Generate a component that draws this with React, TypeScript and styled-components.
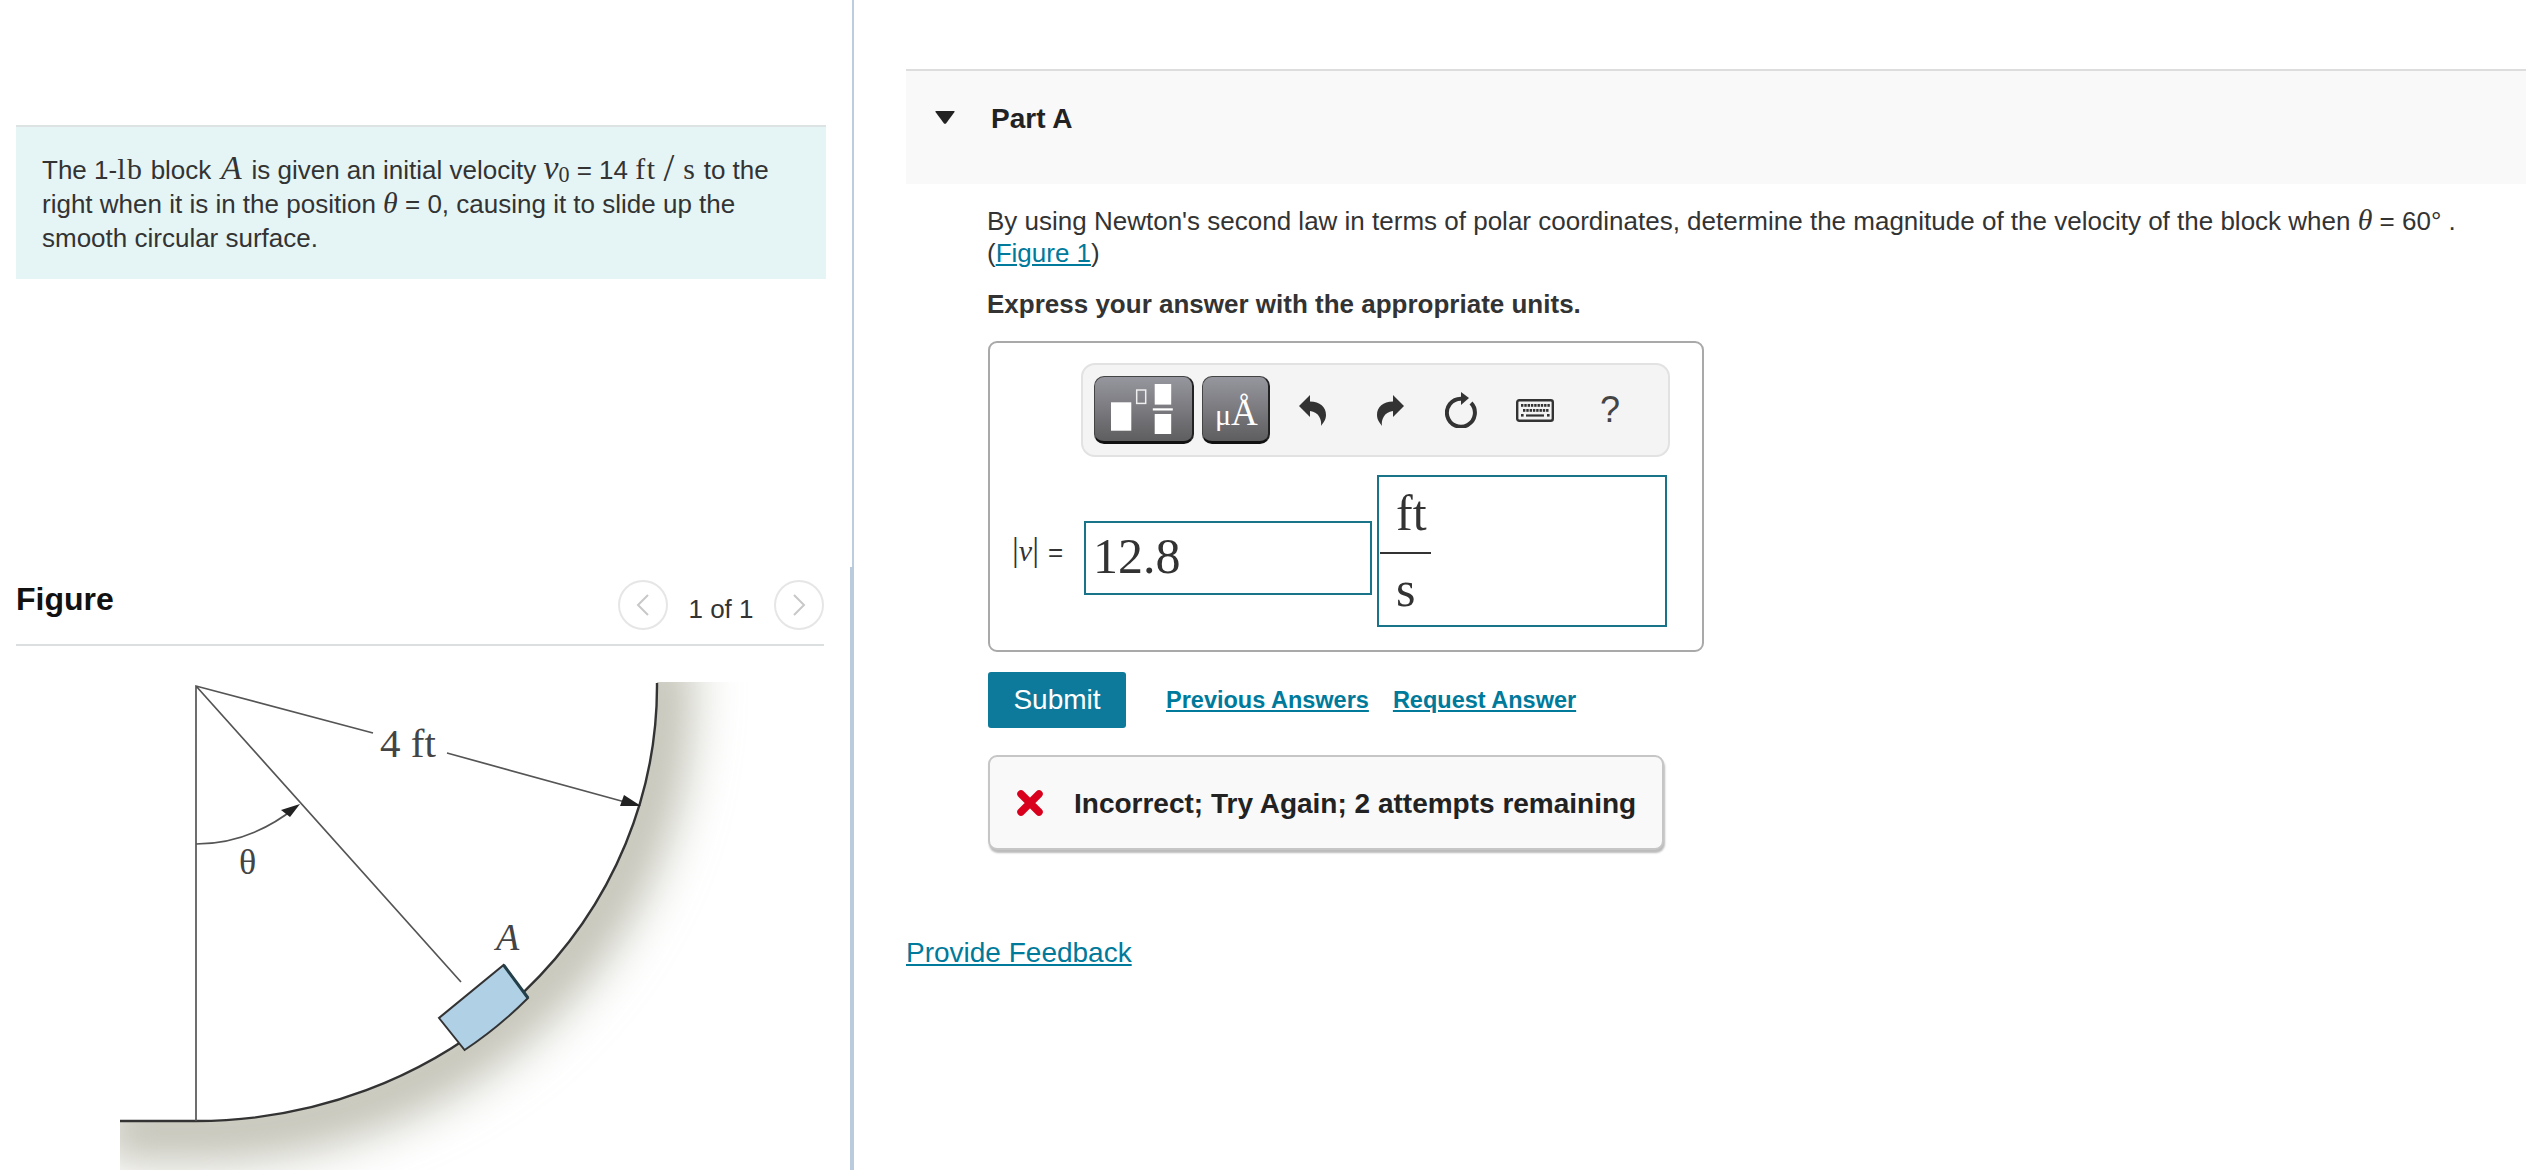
import React from "react";
import styled, { createGlobalStyle } from "styled-components";

const Global = createGlobalStyle`
  html, body { margin: 0; padding: 0; background: #fff; height: 100%; overflow: hidden; }
  body { font-family: "Liberation Sans", Arial, sans-serif; color: #333; }
`;

const Page = styled.div`
  display: grid;
  grid-template-columns: 854px 1fr;
  width: 2526px;
  height: 1170px;
  overflow: hidden;
`;

const LeftPane = styled.section`
  box-sizing: border-box;
  height: 1170px;
  padding: 125px 26px 0 16px;
  border-right: 2px solid #bccddf;
  position: relative;
  &::after {
    content: "";
    position: absolute;
    right: -2px;
    top: 567px;
    bottom: 0;
    width: 4px;
    background: #b9cbdd;
  }
`;

const Intro = styled.div`
  box-sizing: border-box;
  height: 154px;
  border-top: 2px solid #dde3e3;
  background: #e5f5f6;
  padding: 24px 26px 0;
  font-size: 26px;
  color: #333;
`;

const IntroLine = styled.div<{ $h: number }>`
  height: ${(p) => p.$h}px;
  line-height: ${(p) => p.$h}px;
  white-space: nowrap;
`;

const Unit = styled.span`
  font-family: "Liberation Serif", serif;
  font-size: 1.15em;
  letter-spacing: 1.5px;
`;

const MathI = styled.i`
  font-family: "Liberation Serif", serif;
  font-size: 1.15em;
  line-height: 0;
`;

const BigMath = styled.i<{ $gap: number }>`
  font-family: "Liberation Serif", serif;
  font-size: 1.3em;
  line-height: 0;
  margin: 0 ${(p) => p.$gap}px;
`;

const Sub = styled.span`
  font-family: "Liberation Serif", serif;
  font-size: 0.85em;
  line-height: 0;
  vertical-align: -3px;
`;

const Slash = styled.span`
  font-family: "Liberation Serif", serif;
  font-size: 1.5em;
  font-weight: 300;
  line-height: 0;
  vertical-align: -2px;
  margin: 0 9px 0 7px;
`;

const FigureHead = styled.header`
  box-sizing: border-box;
  margin: 296px 2px 0 0;
  height: 71px;
  border-bottom: 2px solid #dcdfe0;
  display: flex;
  align-items: center;
`;

const FigureTitle = styled.h2`
  margin: 0 0 20px;
  font-size: 32px;
  font-weight: 700;
  color: #111;
  flex: 1;
`;

const NavCircle = styled.span`
  box-sizing: border-box;
  width: 50px;
  height: 50px;
  border: 2px solid #e6e6e6;
  border-radius: 50%;
  display: flex;
  align-items: center;
  justify-content: center;
  margin-bottom: 10px;
`;

const NavCount = styled.span`
  font-size: 26px;
  color: #333;
  width: 106px;
  text-align: center;
`;

const FigureArt = styled.svg`
  display: block;
  margin-left: -16px;
  width: 852px;
  height: 524px;
`;

const RightPane = styled.section`
  height: 1170px;
  overflow: hidden;
  padding: 69px 0 0 52px;
`;

const PartHead = styled.header`
  box-sizing: border-box;
  height: 115px;
  border-top: 2px solid #dddddd;
  background: #f9f9f9;
  display: flex;
  padding: 32px 0 0 29px;
  align-items: flex-start;
`;

const Caret = styled.svg`
  width: 20px;
  height: 13px;
  margin-top: 8px;
`;

const PartTitle = styled.h3`
  margin: 0 0 0 36px;
  font-size: 28px;
  line-height: 32px;
  font-weight: 700;
  color: #222;
`;

const PartBody = styled.div`
  padding: 21px 0 0 81px;
`;

const Para = styled.p`
  margin: 0;
  font-size: 26px;
  line-height: 32px;
  color: #333;
  white-space: nowrap;
`;

const FigLink = styled.a`
  color: #007a9b;
  text-decoration: underline;
`;

const Instr = styled.p`
  margin: 19px 0 0;
  font-size: 26px;
  line-height: 32px;
  font-weight: 700;
  color: #333;
`;

const AnswerBox = styled.div`
  box-sizing: border-box;
  width: 716px;
  height: 311px;
  margin: 21px 0 0 1px;
  border: 2px solid #a9a9a9;
  border-radius: 9px;
  padding: 20px 0 0 91px;
`;

const Toolbar = styled.div`
  box-sizing: border-box;
  width: 589px;
  height: 94px;
  border: 2px solid #e2e2e2;
  border-radius: 14px;
  background: #f4f4f4;
  display: flex;
  align-items: center;
  padding: 0 0 0 11px;
`;

const TplButton = styled.span<{ $w: number }>`
  box-sizing: border-box;
  width: ${(p) => p.$w}px;
  height: 68px;
  margin-right: 8px;
  border-radius: 10px;
  border: 1px solid #444;
  border-bottom: 3px solid #111;
  border-right: 2px solid #222;
  background: linear-gradient(#96969e, #5e5e60);
  display: flex;
  align-items: center;
  justify-content: center;
`;

const ToolIcon = styled.span<{ $w: number }>`
  width: ${(p) => p.$w}px;
  display: flex;
  justify-content: center;
  align-items: center;
  color: #333;
`;

const HelpMark = styled.span`
  font-size: 36px;
  color: #444;
  line-height: 1;
`;

const EquationRow = styled.div`
  display: flex;
  align-items: center;
  height: 152px;
  margin-top: 18px;
  margin-left: -69px;
`;

const EqLabel = styled.span`
  width: 72px;
  white-space: nowrap;
  color: #333;
  font-family: "Liberation Serif", serif;
  font-size: 30px;
  line-height: 36px;
`;

const EqBar = styled.span`
  font-size: 34px;
  font-weight: 300;
`;

const EqSign = styled.span`
  font-family: "Liberation Sans", sans-serif;
  font-size: 26px;
  margin-left: 9px;
`;

const ValueBox = styled.div`
  box-sizing: border-box;
  width: 288px;
  height: 74px;
  border: 2px solid #1a7489;
  margin-top: 14px;
  padding-left: 7px;
  font-family: "Liberation Serif", serif;
  font-size: 50px;
  line-height: 67px;
  color: #333;
`;

const UnitBox = styled.div`
  box-sizing: border-box;
  width: 290px;
  height: 152px;
  margin-left: 5px;
  border: 2px solid #1a7489;
  padding: 0 0 0 1px;
  font-family: "Liberation Serif", serif;
  font-size: 50px;
  color: #333;
`;

const Frac = styled.div`
  width: 51px;
  display: flex;
  flex-direction: column;
  align-items: flex-start;
`;

const FracPart = styled.span<{ $h: number }>`
  height: ${(p) => p.$h}px;
  line-height: ${(p) => p.$h - 3}px;
  padding-left: 16px;
`;

const FracBar = styled.span`
  width: 51px;
  height: 2px;
  background: #333;
`;

const Actions = styled.div`
  display: flex;
  align-items: center;
  margin: 20px 0 0 1px;
  height: 56px;
`;

const SubmitButton = styled.button`
  width: 138px;
  height: 56px;
  border: none;
  border-radius: 3px;
  background: #0d7a9c;
  color: #fff;
  font: 400 28px "Liberation Sans", sans-serif;
  padding: 0;
  margin-right: 40px;
`;

const ActionLink = styled.a`
  font-size: 23.5px;
  font-weight: 700;
  color: #007a9b;
  text-decoration: underline;
  margin-right: 24px;
`;

const FeedbackBox = styled.div`
  box-sizing: border-box;
  width: 676px;
  height: 95px;
  margin: 27px 0 0 1px;
  border: 2px solid #c6c6c6;
  border-radius: 9px;
  background: #f9f9f9;
  box-shadow: 1px 3px 2px #bbb;
  display: flex;
  align-items: center;
  padding-left: 27px;
`;

const FeedbackText = styled.span`
  margin-left: 31px;
  padding-top: 3px;
  font-size: 28px;
  font-weight: 700;
  color: #222;
  white-space: nowrap;
`;

const ProvideLink = styled.a`
  display: block;
  width: fit-content;
  margin: 87px 0 0;
  font-size: 28px;
  line-height: 32px;
  color: #007a9b;
  text-decoration: underline;
`;

function Figure() {
  return (
    <FigureArt viewBox="0 0 852 524" aria-hidden="true">
      <defs>
        <filter id="soft" x="-20%" y="-20%" width="140%" height="140%">
          <feGaussianBlur stdDeviation="24" />
        </filter>
      </defs>
      {/* the drawing's origin is the page point (0, 646) */}
      <g transform="translate(0,-646)">
        <path
          d="M100 1121 H196 A461 435 0 0 0 657 686 L657 640"
          fill="none"
          stroke="#c0bfb2"
          strokeWidth="62"
          filter="url(#soft)"
          transform="translate(3,8)"
        />
        <path d="M0 640 H657 V686 A461 435 0 0 1 196 1121 H0 Z" fill="#fff" />
        <rect x="0" y="1121" width="120" height="60" fill="#fff" />
        <rect x="0" y="640" width="852" height="42" fill="#fff" />
        <path d="M120 1121 H196 A461 435 0 0 0 657 683" fill="none" stroke="#333" strokeWidth="2.4" />
        <path
          d="M196 1121 V686 L373 733 M447 753 L625 802 M196 686 L461 982"
          fill="none"
          stroke="#555"
          strokeWidth="1.7"
        />
        <path d="M641 806 L620 806 L624 795 Z" fill="#222" />
        <path d="M196 844 C238 844 270 828 296 807" fill="none" stroke="#555" strokeWidth="1.7" />
        <path d="M300 804 L281 810 L290 817 Z" fill="#222" />
        <path d="M503.6 965 L528 998 Q498 1028 464.6 1050 L439 1018 Z" fill="#b0d0e6" stroke="#333" strokeWidth="2" />
        <path d="M503.6 965 L528 998" fill="none" stroke="#23404a" strokeWidth="3" />
        <text x="380" y="757" fontFamily="Liberation Serif" fontSize="41" fill="#444">4 ft</text>
        <text x="239" y="874" fontFamily="Liberation Serif" fontSize="36" fill="#444">θ</text>
        <text x="496" y="950" fontFamily="Liberation Serif" fontStyle="italic" fontSize="38" fill="#444">A</text>
      </g>
    </FigureArt>
  );
}

function Chevron({ left }: { left?: boolean }) {
  return (
    <svg width="14" height="24" viewBox="0 0 14 24">
      <path d={left ? "M12 2 L2 12 L12 22" : "M2 2 L12 12 L2 22"} fill="none" stroke="#c8c8c8" strokeWidth="2" />
    </svg>
  );
}

function TemplatesGlyph() {
  return (
    <svg width="65" height="50" viewBox="0 0 65 50">
      <rect x="0" y="18.3" width="20.3" height="28.4" fill="#fff" />
      <rect x="25.7" y="6" width="9" height="13.4" fill="none" stroke="#eee" strokeWidth="1.5" />
      <rect x="43.7" y="0" width="16.5" height="20.6" fill="#fff" />
      <rect x="41.8" y="24.3" width="20" height="2.2" fill="#fff" />
      <rect x="43.7" y="30" width="16.5" height="20" fill="#fff" />
    </svg>
  );
}

function UnitGlyph() {
  return (
    <svg width="48" height="46" viewBox="0 0 48 46">
      <text x="3" y="39" fontFamily="Liberation Serif" fontSize="30" fill="#fff">μ</text>
      <text x="19" y="39" fontFamily="Liberation Serif" fontSize="37" fill="#fff">Å</text>
    </svg>
  );
}

function Undo({ flip }: { flip?: boolean }) {
  return (
    <svg width="27" height="31" viewBox="0 0 27 31" style={flip ? { transform: "scaleX(-1)" } : undefined}>
      <path d="M0 11 L11 0 V6.5 C21 6.5 27 12 27 20 C27 25 24 28 22 31 C23 25 20 17 11 16 V22 Z" fill="#333" />
    </svg>
  );
}

function Reset() {
  return (
    <svg width="32" height="36" viewBox="0 0 32 36">
      <path d="M26 11 A14 14 0 1 1 16 6.7" fill="none" stroke="#333" strokeWidth="4" />
      <path d="M16 0 L24 6 L16 13 Z" fill="#333" />
    </svg>
  );
}

function Keyboard() {
  const keys: React.ReactElement[] = [];
  for (let i = 0; i < 9; i++) keys.push(<rect key={"a" + i} x={5 + i * 3.3} y="5" width="2.4" height="2.8" fill="#333" />);
  for (let i = 0; i < 8; i++) keys.push(<rect key={"b" + i} x={7 + i * 3.3} y="10" width="2.4" height="2.8" fill="#333" />);
  return (
    <svg width="38" height="23" viewBox="0 0 38 23">
      <rect x="1.2" y="1.2" width="35.6" height="20.6" rx="2" fill="#f4f4f4" stroke="#333" strokeWidth="2.4" />
      {keys}
      <rect x="5" y="15" width="2.6" height="2.6" fill="#333" />
      <rect x="10" y="15.4" width="18" height="2.2" fill="#333" />
      <rect x="31" y="15" width="2.6" height="2.6" fill="#333" />
    </svg>
  );
}

export default function App() {
  return (
    <Page>
      <Global />
      <LeftPane>
        <Intro>
          <IntroLine $h={36}>
            The 1-<Unit>lb</Unit> block <BigMath $gap={2.5}>A</BigMath> is given an initial velocity{" "}
            <BigMath $gap={0}>v</BigMath>
            <Sub>0</Sub> = 14 <Unit>ft</Unit>
            <Slash>/</Slash>
            <Unit>s</Unit> to the
          </IntroLine>
          <IntroLine $h={35}>
            right when it is in the position <MathI>θ</MathI> = 0, causing it to slide up the
          </IntroLine>
          <IntroLine $h={33}>smooth circular surface.</IntroLine>
        </Intro>
        <FigureHead>
          <FigureTitle>Figure</FigureTitle>
          <NavCircle>
            <Chevron left />
          </NavCircle>
          <NavCount>1 of 1</NavCount>
          <NavCircle>
            <Chevron />
          </NavCircle>
        </FigureHead>
        <Figure />
      </LeftPane>
      <RightPane>
        <PartHead>
          <Caret viewBox="0 0 20 13">
            <path d="M1 0 H19 Q20 0 19.5 1 L11 12.5 Q10 13 9 12.5 L0.5 1 Q0 0 1 0 Z" fill="#222" />
          </Caret>
          <PartTitle>Part A</PartTitle>
        </PartHead>
        <PartBody>
          <Para>
            By using Newton's second law in terms of polar coordinates, determine the magnitude of the velocity of the
            block when <MathI>θ</MathI> = 60° .
            <br />(<FigLink>Figure 1</FigLink>)
          </Para>
          <Instr>Express your answer with the appropriate units.</Instr>
          <AnswerBox>
            <Toolbar>
              <TplButton $w={100}>
                <TemplatesGlyph />
              </TplButton>
              <TplButton $w={68}>
                <UnitGlyph />
              </TplButton>
              <ToolIcon $w={68}>
                <Undo />
              </ToolIcon>
              <ToolIcon $w={88}>
                <Undo flip />
              </ToolIcon>
              <ToolIcon $w={54}>
                <Reset />
              </ToolIcon>
              <ToolIcon $w={94}>
                <Keyboard />
              </ToolIcon>
              <ToolIcon $w={56}>
                <HelpMark>?</HelpMark>
              </ToolIcon>
            </Toolbar>
            <EquationRow>
              <EqLabel>
                <EqBar>|</EqBar>
                <i>v</i>
                <EqBar>|</EqBar>
                <EqSign>=</EqSign>
              </EqLabel>
              <ValueBox>12.8</ValueBox>
              <UnitBox>
                <Frac>
                  <FracPart $h={75}>ft</FracPart>
                  <FracBar />
                  <FracPart $h={74}>s</FracPart>
                </Frac>
              </UnitBox>
            </EquationRow>
          </AnswerBox>
          <Actions>
            <SubmitButton>Submit</SubmitButton>
            <ActionLink>Previous Answers</ActionLink>
            <ActionLink>Request Answer</ActionLink>
          </Actions>
          <FeedbackBox>
            <svg width="26" height="26" viewBox="0 0 26 26">
              <path d="M4 4 L22 22 M22 4 L4 22" stroke="#d9001d" strokeWidth="7.5" strokeLinecap="round" />
            </svg>
            <FeedbackText>Incorrect; Try Again; 2 attempts remaining</FeedbackText>
          </FeedbackBox>
        </PartBody>
        <ProvideLink>Provide Feedback</ProvideLink>
      </RightPane>
    </Page>
  );
}
